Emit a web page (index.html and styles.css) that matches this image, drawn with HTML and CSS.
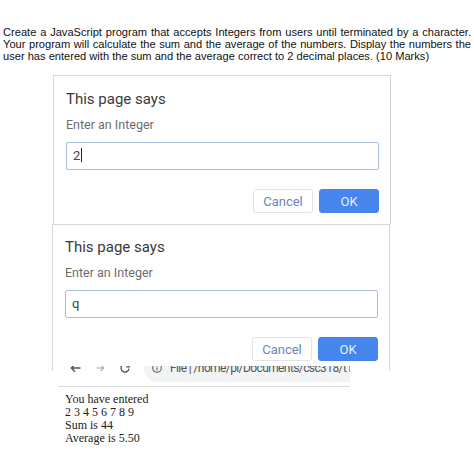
FILE: index.html
```html
<!DOCTYPE html>
<html lang="en">
<head>
    <meta charset="UTF-8">
    <meta name="viewport" content="width=device-width, initial-scale=1.0">
    <title>Integer Sum and Average</title>
    <link rel="stylesheet" href="styles.css">
</head>
<body>
    <p class="question">Create a JavaScript program that accepts Integers from users until terminated by a character. Your program will calculate the sum and the average of the numbers. Display the numbers the user has entered with the sum and the average correct to 2 decimal places. (10 Marks)</p>

    <div class="dialog">
        <h2>This page says</h2>
        <p class="prompt">Enter an Integer</p>
        <div class="field">2<span class="caret"></span></div>
        <div class="actions">
            <button class="btn cancel">Cancel</button>
            <button class="btn ok">OK</button>
        </div>
    </div>

    <div class="dialog second">
        <h2>This page says</h2>
        <p class="prompt">Enter an Integer</p>
        <div class="field">q</div>
        <div class="actions">
            <button class="btn cancel">Cancel</button>
            <button class="btn ok">OK</button>
        </div>
    </div>

    <div class="toolbar">
        <div class="toolbar-row">
            <svg class="nav" width="11" height="10" viewBox="0 0 11 10">
                <path d="M10.5 5 H1.5 M5 1.3 L1.3 5 L5 8.7" fill="none" stroke="#555" stroke-width="1.4"/>
            </svg>
            <svg class="nav" width="9" height="10" viewBox="0 0 9 10">
                <path d="M0.5 5 H7.5 M4.5 1.8 L7.6 5 L4.5 8.2" fill="none" stroke="#aaa" stroke-width="1.2"/>
            </svg>
            <svg class="nav" width="10" height="10" viewBox="0 0 10 10">
                <path d="M8.6 3.2 A4 4 0 1 0 9 5.6" fill="none" stroke="#555" stroke-width="1.3"/>
                <path d="M9.2 0.8 L9.2 3.8 L6.2 3.8" fill="none" stroke="#555" stroke-width="1.3"/>
            </svg>
            <div class="omnibox">
                <svg width="10" height="10" viewBox="0 0 10 10">
                    <circle cx="5" cy="5" r="4.3" fill="none" stroke="#666" stroke-width="1.1"/>
                    <path d="M5 4.4 V7.6" stroke="#666" stroke-width="1.2"/>
                    <circle cx="5" cy="2.9" r="0.7" fill="#666"/>
                </svg>
                <span class="url">File | /home/pi/Documents/csc318/t1/</span>
            </div>
        </div>
    </div>

    <div class="output">
        You have entered<br>
        2 3 4 5 6 7 8 9<br>
        Sum is 44<br>
        Average is 5.50
    </div>
</body>
</html>
```

FILE: styles.css
```css
* {
    box-sizing: border-box;
}
body {
    margin: 0;
    background: #fff;
    font-family: Roboto, "Liberation Sans", Arial, sans-serif;
}
.question {
    margin: 26px 3px 0 3px;
    font-family: "Liberation Sans", Arial, sans-serif;
    font-size: 11.1px;
    line-height: 12px;
    color: #111;
    text-align: justify;
}
.dialog {
    width: 338px;
    margin: 13px 0 0 53px;
    padding: 13px 11px 11px 12px;
    border: 1px solid #d6d6d6;
    border-bottom: none;
    background: #fff;
}
.dialog.second {
    margin-top: 0;
    margin-left: 52px;
    padding-top: 12px;
    padding-bottom: 10px;
}
.dialog h2 {
    margin: 0;
    font-size: 15px;
    font-weight: normal;
    line-height: 20px;
    color: #3a3a3a;
}
.prompt {
    margin: 8px 0 0 0;
    font-size: 12.5px;
    line-height: 16px;
    color: #6d6d6d;
}
.field {
    height: 28px;
    margin-top: 9px;
    padding: 0 6px;
    border: 1px solid #a9bcd8;
    border-radius: 2px;
    font-size: 13px;
    line-height: 26px;
    color: #444;
}
.caret {
    display: inline-block;
    width: 1px;
    height: 14px;
    margin-left: 1px;
    vertical-align: -2px;
    background: #222;
}
.actions {
    display: flex;
    justify-content: flex-end;
    gap: 6px;
    margin-top: 19px;
}
.btn {
    width: 60px;
    height: 24px;
    padding: 0;
    border-radius: 3px;
    font-family: Roboto, "Liberation Sans", Arial, sans-serif;
    font-size: 13px;
}
.cancel {
    background: #fff;
    border: 1px solid #e0e3e8;
    color: #6a86bd;
}
.ok {
    background: #4585ec;
    border: 1px solid #4585ec;
    color: #e8efff;
}
.toolbar {
    position: relative;
    width: 292px;
    height: 21px;
    margin: -5px 0 0 58px;
    overflow: hidden;
    border-bottom: 1px solid #dcdcdc;
}
.toolbar-row {
    display: flex;
    align-items: center;
    height: 28px;
    margin-top: -12px;
    padding-left: 12px;
}
.nav {
    flex: none;
    margin-right: 15px;
}
.omnibox {
    display: flex;
    align-items: center;
    gap: 8px;
    flex: none;
    width: 240px;
    height: 28px;
    margin-left: -1px;
    padding-left: 8px;
    border-radius: 14px 0 0 14px;
    background: #f1f3f4;
}
.url {
    font-size: 12px;
    letter-spacing: -0.6px;
    color: #555;
    white-space: nowrap;
}
.output {
    margin: 6px 0 0 65px;
    font-family: "Liberation Serif", "Times New Roman", serif;
    font-size: 12px;
    line-height: 13px;
    color: #222;
}
```
